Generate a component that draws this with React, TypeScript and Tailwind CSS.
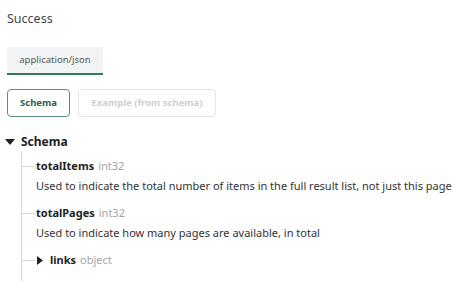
export default function App() {
  const font = { fontFamily: '"Noto Sans", "Open Sans", sans-serif' };
  return (
    <div className="w-[474px] h-[289px] bg-white text-[#1c1e21] overflow-hidden" style={font}>
      <div className="pl-[7px] pt-[10px]">
        <div className="text-[12.5px] leading-[18px] text-[#444]">Success</div>
        <div className="mt-[19px] flex">
          <div className="w-[96px] h-[28px] bg-[#f3f4f5] border-b-2 border-[#2e7d55] flex items-center justify-center text-[9.5px] text-[#555]">
            application/json
          </div>
        </div>
        <div className="mt-[14px] flex gap-[8px]">
          <div className="w-[63px] h-[28px] rounded-[4px] border border-[#5a8f78] flex items-center justify-center text-[9.5px] font-bold text-[#2a5f46]">
            Schema
          </div>
          <div className="w-[138px] h-[28px] rounded-[4px] border border-[#e3e3e3] flex items-center justify-center text-[9.5px] font-bold text-[#cfcfcf]">
            Example (from schema)
          </div>
        </div>
      </div>
      <div className="pl-[5px] mt-[16px]">
        <div className="flex items-center h-[18px]">
          <svg width="10" height="8" viewBox="0 0 10 8" className="mr-[6px]"><path d="M0 1 L10 1 L5 7 Z" fill="#222" /></svg>
          <span className="text-[12px] font-bold text-[#222]">Schema</span>
        </div>
        <div className="ml-[16px] border-l border-[#d6d6d6] pb-[12px]">
          <div className="pt-[6px]">
            <div className="flex items-center h-[18px]">
              <div className="w-[13px] h-px bg-[#d6d6d6] mr-[1px]" />
              <span className="text-[11px] font-bold text-[#222]">totalItems</span>
              <span className="text-[11px] text-[#a5a5a5] ml-[4px]">int32</span>
            </div>
            <div className="ml-[14px] mt-[2px] text-[11px] leading-[18px] text-[#333]">Used to indicate the total number of items in the full result list, not just this page</div>
          </div>
          <div className="pt-[9px]">
            <div className="flex items-center h-[18px]">
              <div className="w-[13px] h-px bg-[#d6d6d6] mr-[1px]" />
              <span className="text-[11px] font-bold text-[#222]">totalPages</span>
              <span className="text-[11px] text-[#a5a5a5] ml-[4px]">int32</span>
            </div>
            <div className="ml-[14px] mt-[2px] text-[11px] leading-[18px] text-[#333]">Used to indicate how many pages are available, in total</div>
          </div>
          <div className="pt-[9px]">
            <div className="flex items-center h-[18px]">
              <div className="w-[13px] h-px bg-[#d6d6d6] mr-[2px]" />
              <svg width="6" height="9" viewBox="0 0 6 9" className="mr-[7px]"><path d="M0 0 L6 4.5 L0 9 Z" fill="#222" /></svg>
              <span className="text-[11px] font-bold text-[#222]">links</span>
              <span className="text-[11px] text-[#a5a5a5] ml-[4px]">object</span>
            </div>
          </div>
        </div>
      </div>
    </div>
  );
}
